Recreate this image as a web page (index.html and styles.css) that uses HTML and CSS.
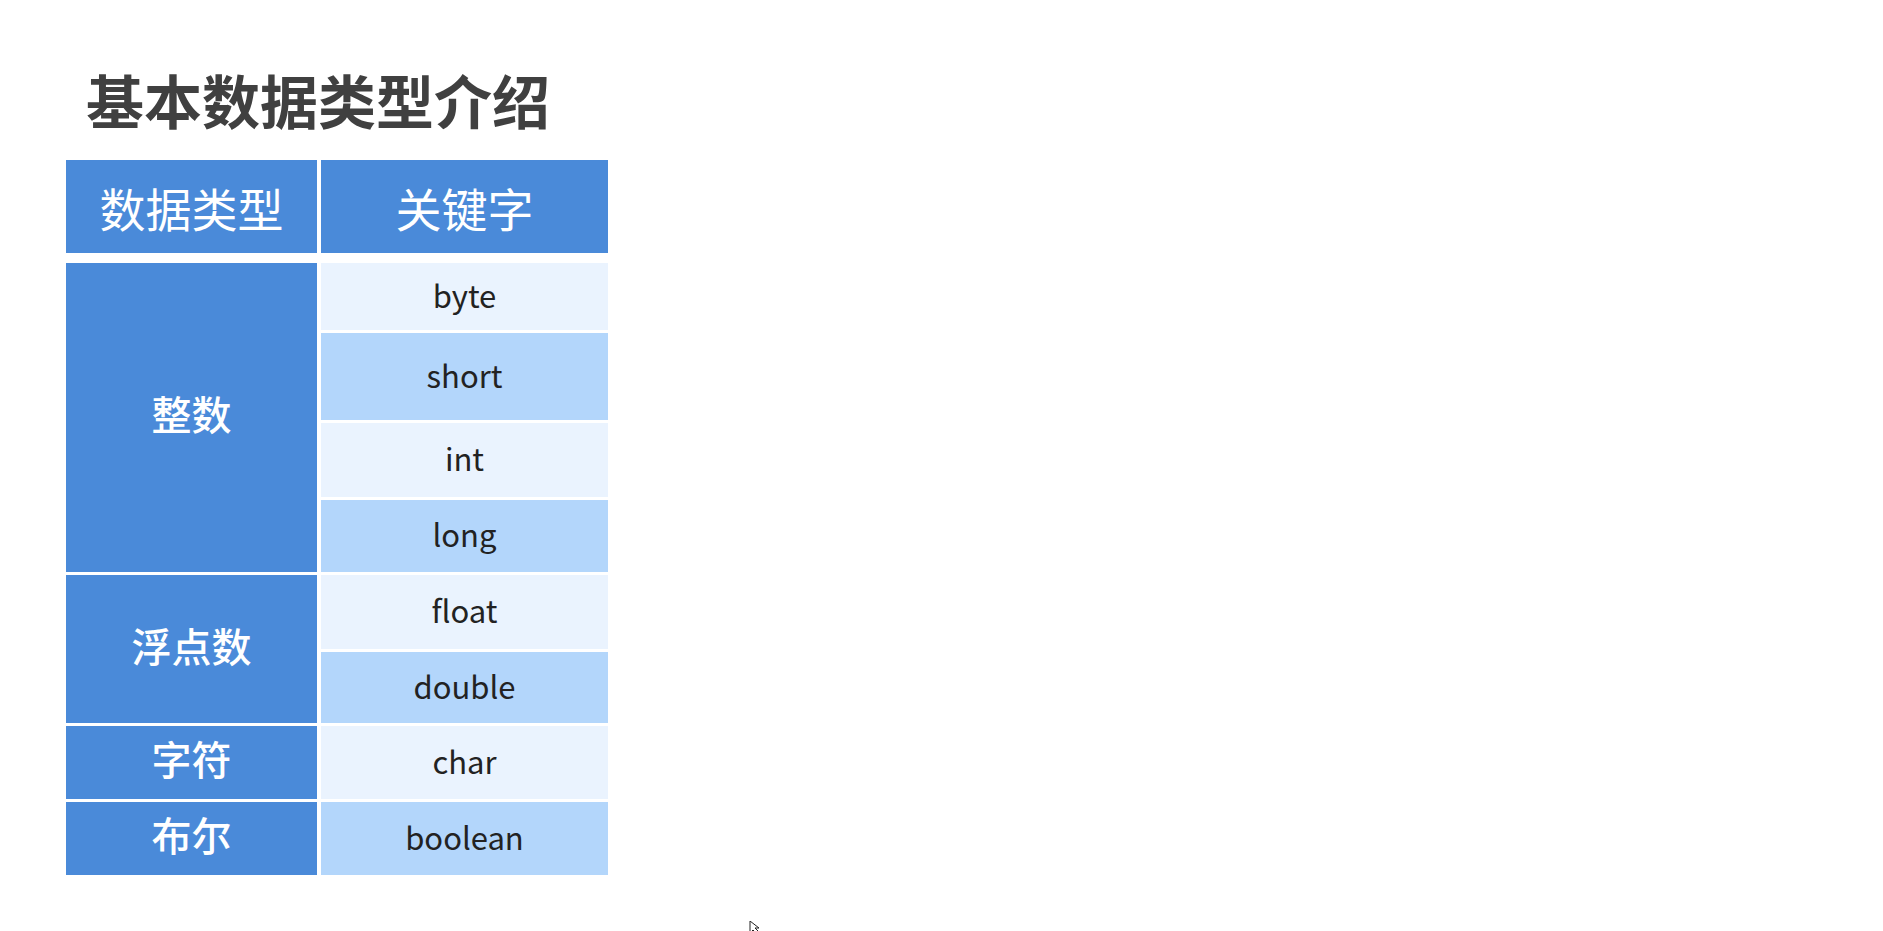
FILE: index.html
```html
<!DOCTYPE html>
<html lang="zh-CN">
<head>
<meta charset="utf-8">
<title>基本数据类型介绍</title>
<link rel="stylesheet" href="styles.css">
</head>
<body>
<main class="slide">
  <h1 class="title">基本数据类型介绍</h1>
  <div class="table">
    <div class="head">
      <div class="cell hcell">数据类型</div>
      <div class="cell hcell">关键字</div>
    </div>
    <div class="body">
      <div class="cell group g-int">整数</div>
      <div class="cell group g-float">浮点数</div>
      <div class="cell group g-char">字符</div>
      <div class="cell group g-bool">布尔</div>
      <div class="cell kw light r1">byte</div>
      <div class="cell kw dark r2">short</div>
      <div class="cell kw light r3">int</div>
      <div class="cell kw dark r4">long</div>
      <div class="cell kw light r5">float</div>
      <div class="cell kw dark r6">double</div>
      <div class="cell kw light r7">char</div>
      <div class="cell kw dark r8">boolean</div>
    </div>
  </div>
  <svg class="cursor" width="12" height="12" viewBox="0 0 12 12"><path d="M1 0 L1 12 L4 9 L7 12 L9 10 L6 7 L10 7 Z" fill="#fff" stroke="#222" stroke-width="1"/></svg>
</main>
</body>
</html>
```
FILE: styles.css
```css
html, body {
  margin: 0;
  padding: 0;
  background: #ffffff;
}
body {
  font-family: "Noto Sans CJK SC", "Noto Sans", sans-serif;
  width: 1883px;
  height: 931px;
  overflow: hidden;
}
.slide {
  position: relative;
  width: 1883px;
  height: 931px;
  padding: 70px 0 0 66px;
  box-sizing: border-box;
}
.title {
  margin: 0 0 32px 20px;
  font-size: 58px;
  line-height: 58px;
  font-weight: 700;
  color: #404040;
  letter-spacing: 0;
}
.table {
  width: 542px;
}
.head,
.body {
  display: grid;
  grid-template-columns: 251px 287px;
  column-gap: 4px;
}
.head {
  grid-template-rows: 93px;
  margin-bottom: 10px;
}
.body {
  grid-template-rows: 67px 87px 74px 72px 74px 71px 73px 73px;
  row-gap: 3px;
}
.cell {
  display: flex;
  align-items: center;
  justify-content: center;
  box-sizing: border-box;
}
.hcell {
  background: #4a8ad9;
  color: #ffffff;
  font-size: 46px;
  font-weight: 400;
}
.group {
  background: #4a8ad9;
  color: #ffffff;
  font-size: 40px;
  font-weight: 500;
  grid-column: 1;
  padding-bottom: 9px;
}
.g-int { grid-row: 1 / 5; }
.g-float { grid-row: 5 / 7; }
.g-char { grid-row: 7; }
.g-bool { grid-row: 8; }
.kw {
  grid-column: 2;
  color: #222222;
  font-size: 31px;
  font-weight: 400;
  padding-bottom: 5px;
}
.light { background: #eaf3fe; }
.dark { background: #b3d6fb; }
.r1 { grid-row: 1; }
.r2 { grid-row: 2; }
.r3 { grid-row: 3; }
.r4 { grid-row: 4; }
.r5 { grid-row: 5; }
.r6 { grid-row: 6; }
.r7 { grid-row: 7; }
.r8 { grid-row: 8; }
.cursor {
  position: absolute;
  left: 749px;
  top: 921px;
}
```
